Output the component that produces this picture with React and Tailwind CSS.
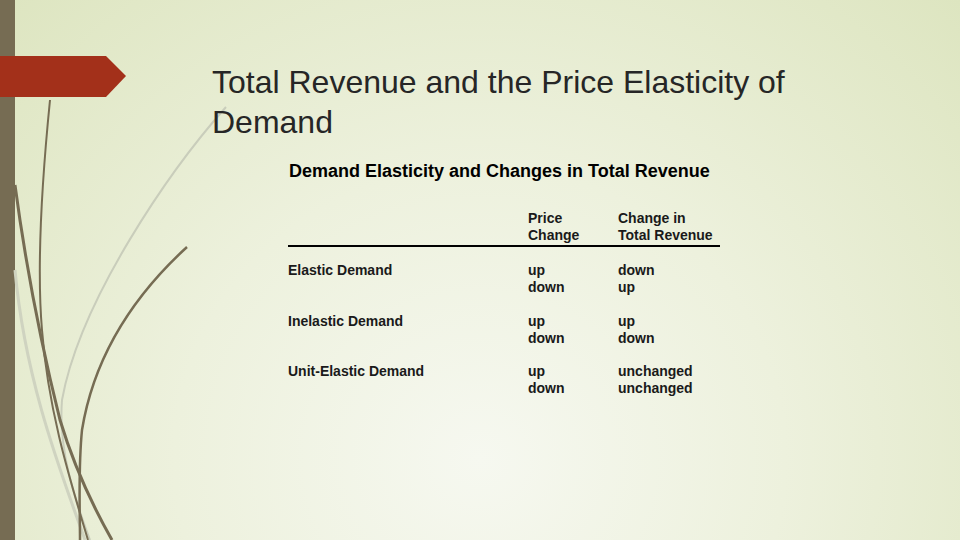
import React from 'react';

const rows = [
  { label: 'Elastic Demand', price: ['up', 'down'], revenue: ['down', 'up'] },
  { label: 'Inelastic Demand', price: ['up', 'down'], revenue: ['up', 'down'] },
  { label: 'Unit-Elastic Demand', price: ['up', 'down'], revenue: ['unchanged', 'unchanged'] },
];

// decorative grass strokes + red arrow tab
const Decor = () => (
  <svg className="absolute inset-0 pointer-events-none" width="960" height="540" viewBox="0 0 960 540">
    <path d="M226,107 C170,170 80,300 62,400 C58,450 75,500 90,540" fill="none" stroke="#c9cdbb" strokeWidth="2" />
    <path d="M15,270 C25,380 60,470 85,540" fill="none" stroke="#cfd3c0" strokeWidth="3" />
    <path d="M50,100 C44,160 36,260 42,330 C48,410 70,480 88,540" fill="none" stroke="#766c53" strokeWidth="2" />
    <path d="M15,185 C25,260 40,340 60,420 C75,470 95,510 112,540" fill="none" stroke="#766c53" strokeWidth="3" />
    <path d="M187,247 C140,290 95,350 82,430 C78,470 80,510 80,540" fill="none" stroke="#766c53" strokeWidth="2.5" />
    <polygon points="0,56 106,56 126,76 106,97 0,97" fill="#a3301a" />
  </svg>
);

export default function App() {
  return (
    <div
      className="relative w-[960px] h-[540px] overflow-hidden flex bg-[radial-gradient(ellipse_at_50%_85%,#f6f8f0_0%,#edf1dd_45%,#dde5c0_100%)]"
      style={{ fontFamily: '"Liberation Sans", Arial, sans-serif' }}
    >
      <div className="w-[15px] h-full bg-[#766c53] shrink-0" />
      <Decor />
      <div className="relative z-10 flex-1 pl-[197px] pt-[62px]">
        <h1 className="text-[32px] leading-[40px] text-[#262626] w-[620px]">
          Total Revenue and the Price Elasticity of Demand
        </h1>
        <h2 className="mt-[17px] ml-[77px] text-[18px] leading-[24px] font-bold text-black">
          Demand Elasticity and Changes in Total Revenue
        </h2>
        <div className="ml-[76px] mt-[27px] w-[432px] text-[14px] leading-[17px] font-bold text-[#1a1a1a]">
          <div className="flex border-b-2 border-black pb-px">
            <div className="w-[240px]" />
            <div className="w-[90px]">Price<br />Change</div>
            <div>Change in<br />Total Revenue</div>
          </div>
          <div className="pt-[15px] flex flex-col gap-[16.5px]">
            {rows.map((r) => (
              <div key={r.label} className="flex">
                <div className="w-[240px]">{r.label}</div>
                <div className="w-[90px]">{r.price[0]}<br />{r.price[1]}</div>
                <div>{r.revenue[0]}<br />{r.revenue[1]}</div>
              </div>
            ))}
          </div>
        </div>
      </div>
    </div>
  );
}
